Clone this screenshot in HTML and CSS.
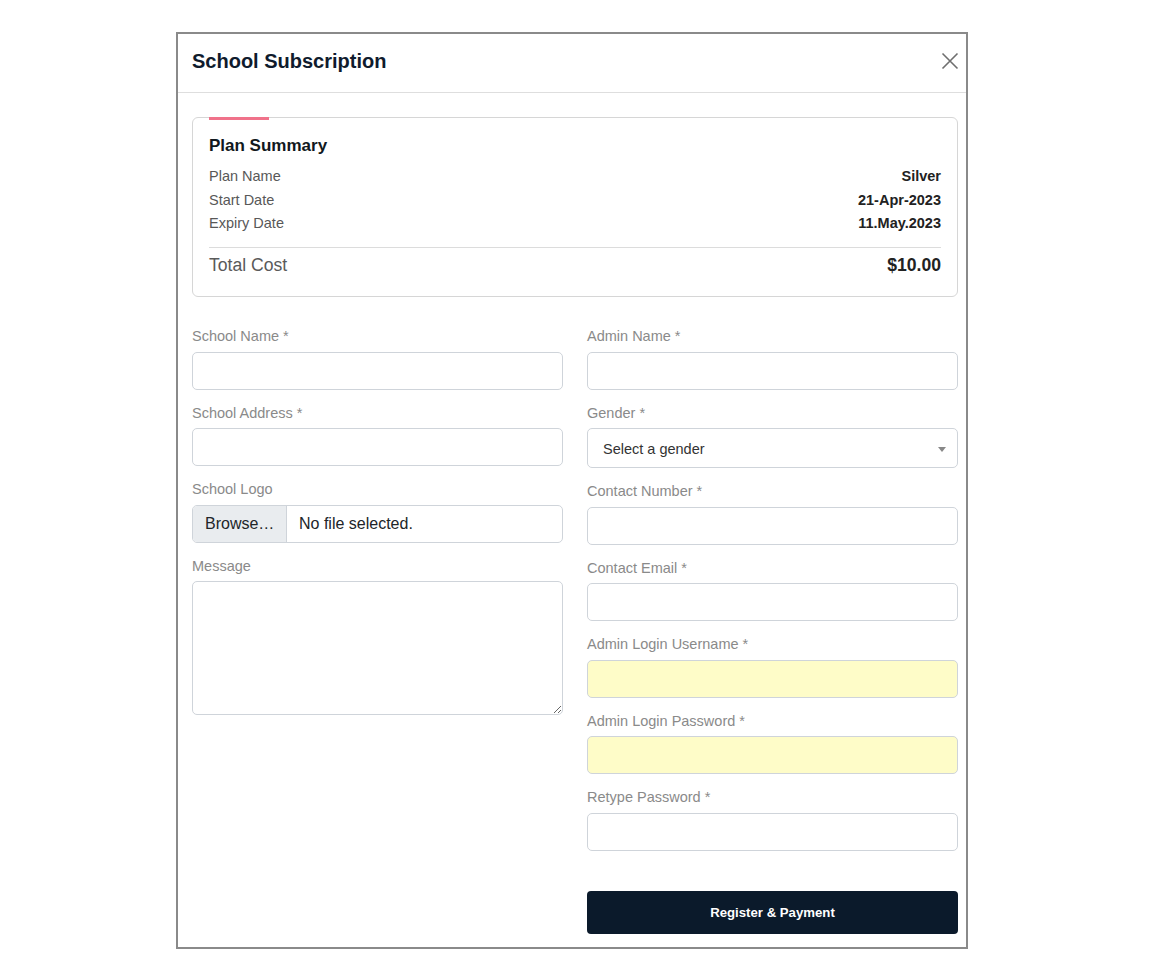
FILE: index.html
```html
<!DOCTYPE html>
<html lang="en">
<head>
<meta charset="utf-8">
<title>School Subscription</title>
<link rel="stylesheet" href="styles.css">
</head>
<body>
<div class="modal">
  <div class="modal-header">
    <h1 class="modal-title">School Subscription</h1>
    <button class="close" type="button" aria-label="Close">
      <svg width="18" height="18" viewBox="0 0 18 18"><path d="M1.5 1.5 L16.5 16.5 M16.5 1.5 L1.5 16.5" stroke="#6f6f6f" stroke-width="1.6" fill="none"/></svg>
    </button>
  </div>
  <div class="modal-body">
    <div class="summary">
      <span class="accent"></span>
      <h2 class="summary-title">Plan Summary</h2>
      <div class="row"><span class="k">Plan Name</span><span class="v">Silver</span></div>
      <div class="row"><span class="k">Start Date</span><span class="v">21-Apr-2023</span></div>
      <div class="row"><span class="k">Expiry Date</span><span class="v">11.May.2023</span></div>
      <div class="total"><span class="k">Total Cost</span><span class="v">$10.00</span></div>
    </div>

    <form class="form">
      <div class="col">
        <div class="group">
          <label class="label">School Name *</label>
          <input class="input" type="text">
        </div>
        <div class="group">
          <label class="label">School Address *</label>
          <input class="input" type="text">
        </div>
        <div class="group">
          <label class="label">School Logo</label>
          <div class="file">
            <span class="file-btn">Browse…</span>
            <span class="file-name">No file selected.</span>
          </div>
        </div>
        <div class="group">
          <label class="label">Message</label>
          <textarea class="textarea"></textarea>
        </div>
      </div>
      <div class="col">
        <div class="group">
          <label class="label">Admin Name *</label>
          <input class="input" type="text">
        </div>
        <div class="group">
          <label class="label">Gender *</label>
          <div class="select">
            <span>Select a gender</span>
            <span class="caret"></span>
          </div>
        </div>
        <div class="group">
          <label class="label">Contact Number *</label>
          <input class="input" type="text">
        </div>
        <div class="group">
          <label class="label">Contact Email *</label>
          <input class="input" type="text">
        </div>
        <div class="group">
          <label class="label">Admin Login Username *</label>
          <input class="input autofill" type="text">
        </div>
        <div class="group">
          <label class="label">Admin Login Password *</label>
          <input class="input autofill" type="password">
        </div>
        <div class="group">
          <label class="label">Retype Password *</label>
          <input class="input" type="password">
        </div>
        <button class="submit" type="button">Register &amp; Payment</button>
      </div>
    </form>
  </div>
</div>
</body>
</html>
```

FILE: styles.css
```css
* { box-sizing: border-box; }

body {
  margin: 0;
  background: #ffffff;
  font-family: "Liberation Sans", Arial, sans-serif;
  color: #212529;
}

.modal {
  width: 792px;
  margin: 32px 0 0 176px;
  border: 2px solid #8a8a8a;
  background: #fff;
}

.modal-header {
  height: 59px;
  border-bottom: 1px solid #dedede;
  display: flex;
  align-items: center;
  justify-content: space-between;
  padding: 0 7px 4px 14px;
}

.modal-title {
  margin: 0;
  font-size: 20px;
  font-weight: 700;
  color: #0f1b2d;
  line-height: 24px;
}

.close {
  border: 0;
  background: transparent;
  padding: 0;
  width: 18px;
  height: 18px;
  display: flex;
  cursor: pointer;
}

.modal-body {
  padding: 24px 8px 13px 14px;
}

.summary {
  position: relative;
  border: 1px solid #d6d6d6;
  border-radius: 6px;
  padding: 18px 16px 19px 16px;
}

.accent {
  position: absolute;
  left: 16px;
  top: -1px;
  width: 60px;
  height: 2.5px;
  background: #f0728a;
}

.summary-title {
  margin: 0 0 9px;
  font-size: 17px;
  line-height: 20px;
  font-weight: 700;
  color: #111820;
}

.row {
  display: flex;
  justify-content: space-between;
  font-size: 14.5px;
  line-height: 23.5px;
}

.row .k { color: #585858; }
.row .v { color: #222; font-weight: 700; }

.total {
  margin-top: 11px;
  border-top: 1px solid #dcdcdc;
  padding-top: 5px;
  display: flex;
  justify-content: space-between;
  font-size: 17.6px;
  line-height: 24px;
}

.total .k { color: #5a5a5a; }
.total .v { color: #222; font-weight: 700; }

.form {
  margin-top: 28.5px;
  display: grid;
  grid-template-columns: 371px 371px;
  column-gap: 24px;
}

.col {
  display: flex;
  flex-direction: column;
}

.group {
  margin-bottom: 12px;
}

.label {
  display: block;
  font-size: 14.5px;
  line-height: 22.5px;
  color: #8a8a8a;
  margin-bottom: 4px;
}

.input {
  display: block;
  width: 100%;
  height: 38px;
  border: 1px solid #cfd4da;
  border-radius: 5px;
  background: #fff;
  font: inherit;
  outline: none;
}

.input.autofill {
  background: #fefcc8;
}

.file {
  display: flex;
  height: 38px;
  border: 1px solid #cfd4da;
  border-radius: 5px;
  overflow: hidden;
  font-size: 16px;
  color: #212529;
}

.file-btn {
  width: 94px;
  background: #e9ecef;
  border-right: 1px solid #cfd4da;
  display: flex;
  align-items: center;
  padding-left: 12px;
}

.file-name {
  display: flex;
  align-items: center;
  padding-left: 12px;
}

.textarea {
  display: block;
  width: 100%;
  height: 134px;
  border: 1px solid #cfd4da;
  border-radius: 5px;
  resize: vertical;
  font: inherit;
  outline: none;
}

.select {
  height: 40px;
  border: 1px solid #cfd4da;
  border-radius: 5px;
  display: flex;
  align-items: center;
  justify-content: space-between;
  padding: 2px 11px 0 15px;
  font-size: 14.5px;
  color: #333;
}

.caret {
  width: 0;
  height: 0;
  border-left: 4px solid transparent;
  border-right: 4px solid transparent;
  border-top: 5px solid #888;
}

.submit {
  margin-top: 28px;
  height: 43px;
  width: 100%;
  border: 0;
  border-radius: 4px;
  background: #0b1a2b;
  color: #fff;
  font-family: "Liberation Sans", Arial, sans-serif;
  font-weight: 700;
  font-size: 13.2px;
  cursor: pointer;
}
```
